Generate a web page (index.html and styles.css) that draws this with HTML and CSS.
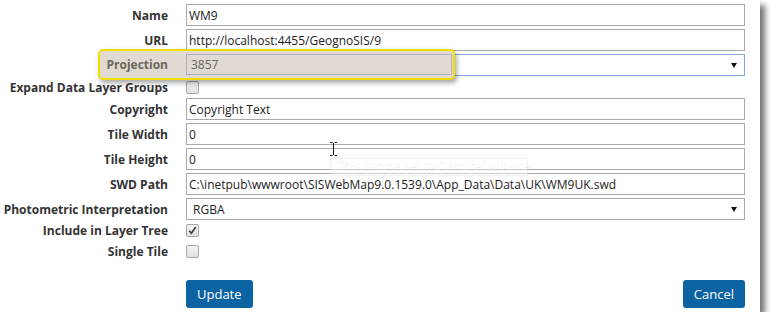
FILE: index.html
```html
<!DOCTYPE html>
<html>
<head>
<meta charset="utf-8">
<link rel="stylesheet" href="styles.css">
</head>
<body>
<div class="panel">
  <form class="form">
    <div class="row"><label class="lbl">Name</label><div class="field"><span class="val">WM9</span></div></div>
    <div class="row"><label class="lbl">URL</label><div class="field"><span class="val">http://localhost:4455/GeognoSIS/9</span></div></div>
    <div class="row"><label class="lbl">Projection</label><div class="field select focus"><span class="val"></span><span class="arrow"></span></div></div>
    <div class="row chkrow first"><label class="lbl">Expand Data Layer Groups</label><span class="chk"></span></div>
    <div class="row"><label class="lbl">Copyright</label><div class="field"><span class="val">Copyright Text</span></div></div>
    <div class="row"><label class="lbl">Tile Width</label><div class="field"><span class="val">0</span></div></div>
    <div class="row"><label class="lbl">Tile Height</label><div class="field"><span class="val">0</span></div></div>
    <div class="row"><label class="lbl">SWD Path</label><div class="field"><span class="val">C:\inetpub\wwwroot\SISWebMap9.0.1539.0\App_Data\Data\UK\WM9UK.swd</span></div></div>
    <div class="row"><label class="lbl">Photometric Interpretation</label><div class="field select"><span class="val sel">RGBA</span><span class="arrow"></span></div></div>
    <div class="row chkrow"><label class="lbl">Include in Layer Tree</label><span class="chk checked"><svg width="11" height="11" viewBox="0 0 11 11"><path d="M2.2 5.8 L4.4 8.3 L8.8 2" fill="none" stroke="#3a3a3a" stroke-width="1.6"/></svg></span></div>
    <div class="row chkrow second"><label class="lbl">Single Tile</label><span class="chk"></span></div>
    <div class="actions"><span class="btn">Update</span><span class="btn">Cancel</span></div>
  </form>

  <div class="callout">
    <span class="c-lbl">Projection</span>
    <span class="c-field">3857</span>
  </div>
  <div class="tooltip">This can be set to 0 for default size.</div>
  <svg class="ibeam" width="11" height="16" viewBox="0 0 11 16"><path d="M2 1.5 H4.5 M6.5 1.5 H9 M5.5 2 V14 M2 14.5 H4.5 M6.5 14.5 H9" fill="none" stroke="#111" stroke-width="1"/></svg>
</div>
</body>
</html>
```
FILE: styles.css
```css
html, body {
  margin: 0;
  padding: 0;
  background: #fff;
}
body {
  font-family: "Open Sans", "DejaVu Sans", sans-serif;
  color: #333;
}
.panel {
  position: relative;
  width: 760px;
  height: 312px;
  background: #fff;
  box-shadow: 5px 5px 6px rgba(0, 0, 0, 0.55);
  box-sizing: border-box;
  padding-top: 4px;
}
.form {
  display: flex;
  flex-direction: column;
  gap: 3px;
  width: 745px;
}
.row {
  display: flex;
  align-items: center;
  height: 22px;
}
.lbl {
  width: 168px;
  flex: none;
  text-align: right;
  font-weight: 700;
  font-size: 12px;
  color: #333;
  margin-right: 18px;
}
.field {
  flex: 1;
  height: 22px;
  box-sizing: border-box;
  border: 1px solid #aaa;
  display: flex;
  align-items: center;
  padding-left: 2px;
  font-size: 12px;
  color: #222;
  position: relative;
}
.val.sel { padding-left: 4px; }
.field.focus { border-color: #80a6e0; }
.arrow {
  position: absolute;
  right: 7px;
  top: 8px;
  width: 0;
  height: 0;
  border-left: 3.5px solid transparent;
  border-right: 3.5px solid transparent;
  border-top: 5px solid #111;
}
.chkrow { height: 14px; }
.chkrow.first { height: 16px; }
.chkrow.second { margin-top: 4px; }
.chk {
  width: 13px;
  height: 13px;
  box-sizing: border-box;
  border: 1px solid #a8a8a8;
  border-radius: 2px;
  background: linear-gradient(#f3f3f3, #e0e0e0);
  display: flex;
  align-items: center;
  justify-content: center;
}
.actions {
  display: flex;
  justify-content: space-between;
  margin-left: 186px;
  margin-top: 19px;
}
.btn {
  background: #0b63a3;
  color: #fff;
  font-size: 13px;
  border-radius: 3px;
  height: 28px;
  padding: 0 11px;
  display: flex;
  align-items: center;
}
.callout {
  position: absolute;
  left: 98px;
  top: 49px;
  width: 357px;
  height: 31px;
  box-sizing: border-box;
  border: 2px solid #f2df00;
  border-radius: 5px;
  background: #e1dad0;
  box-shadow: 2px 3px 5px rgba(0, 0, 0, 0.35);
  display: flex;
  align-items: center;
}
.c-lbl {
  width: 68px;
  text-align: right;
  font-weight: 700;
  font-size: 12px;
  color: #6d6760;
  margin-right: 18px;
}
.c-field {
  width: 266px;
  height: 21px;
  box-sizing: border-box;
  border: 1px solid #a9b1c6;
  background: #e1dad0;
  font-size: 12px;
  color: #666;
  display: flex;
  align-items: center;
  padding-left: 4px;
}
.tooltip {
  position: absolute;
  left: 331px;
  top: 158px;
  width: 197px;
  height: 18px;
  box-sizing: border-box;
  border: 1px solid rgba(0, 0, 0, 0.05);
  background: rgba(255, 255, 255, 0.4);
  font-size: 12px;
  color: rgba(0, 0, 0, 0.07);
  padding-left: 6px;
  line-height: 16px;
  white-space: nowrap;
}
.ibeam {
  position: absolute;
  left: 328px;
  top: 141px;
}
```
